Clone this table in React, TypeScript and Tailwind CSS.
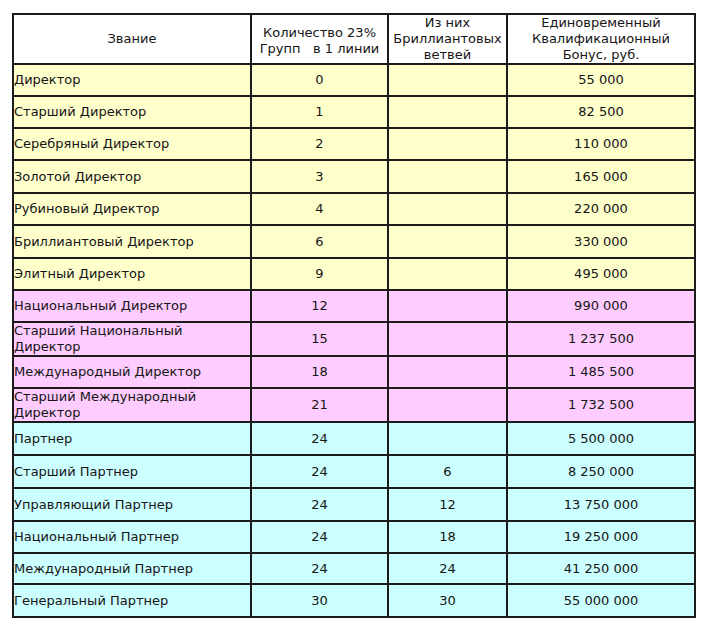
import React from "react";

type Row = { name: React.ReactNode; count: string; br: string; bonus: string; color: string; h: string };

const Y = "bg-[#ffffcc]";
const P = "bg-[#ffccff]";
const C = "bg-[#ccffff]";

const rows: Row[] = [
  { name: "Директор", count: "0", br: "", bonus: "55 000", color: Y, h: "h-[32px]" },
  { name: "Старший Директор", count: "1", br: "", bonus: "82 500", color: Y, h: "h-[32px]" },
  { name: "Серебряный Директор", count: "2", br: "", bonus: "110 000", color: Y, h: "h-[32px]" },
  { name: "Золотой Директор", count: "3", br: "", bonus: "165 000", color: Y, h: "h-[33px]" },
  { name: "Рубиновый Директор", count: "4", br: "", bonus: "220 000", color: Y, h: "h-[32px]" },
  { name: "Бриллиантовый Директор", count: "6", br: "", bonus: "330 000", color: Y, h: "h-[33px]" },
  { name: "Элитный Директор", count: "9", br: "", bonus: "495 000", color: Y, h: "h-[32px]" },
  { name: "Национальный Директор", count: "12", br: "", bonus: "990 000", color: P, h: "h-[32px]" },
  { name: <>Старший Национальный<br />Директор</>, count: "15", br: "", bonus: "1 237 500", color: P, h: "h-[33px]" },
  { name: "Международный Директор", count: "18", br: "", bonus: "1 485 500", color: P, h: "h-[32px]" },
  { name: <>Старший Международный<br />Директор</>, count: "21", br: "", bonus: "1 732 500", color: P, h: "h-[34px]" },
  { name: "Партнер", count: "24", br: "", bonus: "5 500 000", color: C, h: "h-[33px]" },
  { name: "Старший Партнер", count: "24", br: "6", bonus: "8 250 000", color: C, h: "h-[33px]" },
  { name: "Управляющий Партнер", count: "24", br: "12", bonus: "13 750 000", color: C, h: "h-[33px]" },
  { name: "Национальный Партнер", count: "24", br: "18", bonus: "19 250 000", color: C, h: "h-[32px]" },
  { name: "Международный Партнер", count: "24", br: "24", bonus: "41 250 000", color: C, h: "h-[31px]" },
  { name: "Генеральный Партнер", count: "30", br: "30", bonus: "55 000 000", color: C, h: "h-[33px]" },
];

const cell = "border-2 border-[#1c1a1a] p-0";

export default function App() {
  return (
    <div className="bg-white w-[707px] h-[631px] pt-[13px] pl-[12px] text-[13px] leading-[16px] text-[#151515] [font-family:'DejaVu_Sans',Verdana,sans-serif]">
      <table className="border-collapse border-2 border-[#1c1a1a] w-[682px] table-fixed">
        <colgroup>
          <col className="w-[238px]" />
          <col className="w-[137px]" />
          <col className="w-[119px]" />
          <col className="w-[188px]" />
        </colgroup>
        <thead>
          <tr className="h-[50px] bg-white">
            <th className={`${cell} font-normal text-center align-middle`}>Звание</th>
            <th className={`${cell} font-normal text-center align-middle whitespace-pre pt-[3px]`}>{"Количество 23%\nГрупп   в 1 линии"}</th>
            <th className={`${cell} font-normal text-center align-middle`}>Из них<br />Бриллиантовых<br />ветвей</th>
            <th className={`${cell} font-normal text-center align-middle`}>Единовременный<br />Квалификационный<br />Бонус, руб.</th>
          </tr>
        </thead>
        <tbody>
          {rows.map((r, i) => (
            <tr key={i} className={`${r.h} ${r.color}`}>
              <td className={`${cell} text-left align-middle`}>{r.name}</td>
              <td className={`${cell} text-center align-middle`}>{r.count}</td>
              <td className={`${cell} text-center align-middle`}>{r.br}</td>
              <td className={`${cell} text-center align-middle`}>{r.bonus}</td>
            </tr>
          ))}
        </tbody>
      </table>
    </div>
  );
}
